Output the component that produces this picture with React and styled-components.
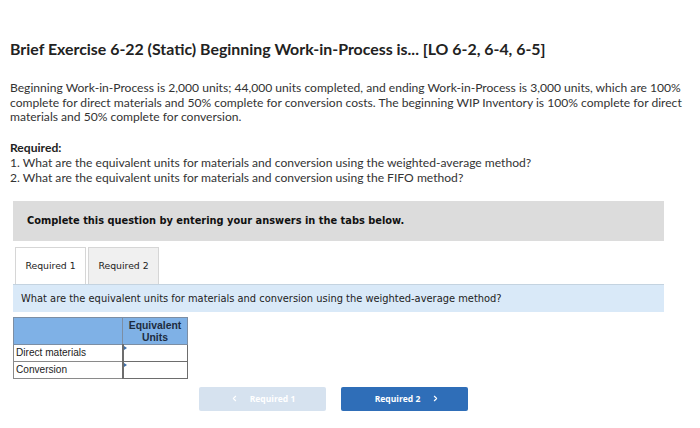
import React from "react";
import styled, {createGlobalStyle} from "styled-components";
import {ChevronLeft, ChevronRight} from "lucide-react";

const Global = createGlobalStyle`
	html, body {
		margin: 0;
		padding: 0;
		background: #fff;
	}
	body {
		font-family: Lato, "Open Sans", sans-serif;
		color: #2b2b2b;
	}
`;

const Page = styled.div`
	width: 700px;
	height: 428px;
	padding: 40px 10px 0 10px;
	box-sizing: border-box;
	overflow: hidden;
`;

const Title = styled.h1`
	margin: 0;
	font-family: Lato, sans-serif;
	font-weight: 700;
	font-size: 15.9px;
	line-height: 18px;
	color: #222;
`;

const Para = styled.p`
	margin: 23px 0 0;
	font-size: 12.1px;
	line-height: 14.6px;
	color: #333;
`;

const Required = styled.div`
	margin-top: 15px;
	font-size: 12.1px;
	line-height: 15px;
	color: #333;
`;

const ReqLabel = styled.div`
	font-weight: 700;
	color: #222;
`;

const Panel = styled.div`
	margin: 0 26px 0 3px;
`;

const Notice = styled.div`
	margin-top: 16px;
	height: 40px;
	background: #dcdcdc;
	display: flex;
	align-items: center;
	padding-left: 14px;
	font-family: "DejaVu Sans", Verdana, sans-serif;
	font-weight: 700;
	font-size: 9.85px;
	color: #111;
`;

const Tabs = styled.div`
	display: flex;
	gap: 2px;
	margin-top: 6px;
	padding-left: 2px;
`;

const Tab = styled.div`
	width: 71px;
	height: 37px;
	box-sizing: border-box;
	display: flex;
	align-items: center;
	justify-content: center;
	font-family: "DejaVu Sans", Verdana, sans-serif;
	font-size: 9.3px;
	color: #222;
	border: 1px solid #d6d6d6;
	border-bottom: none;
	background: ${p => (p.$active ? "#fff" : "#f0f0f0")};
`;

const Question = styled.div`
	height: 28px;
	background: #d9e9f8;
	border-top: 1px solid #c4d3e0;
	box-sizing: border-box;
	display: flex;
	align-items: center;
	padding-left: 8px;
	font-family: "DejaVu Sans", Verdana, sans-serif;
	font-size: 9.9px;
	color: #222;
`;

const Table = styled.table`
	margin-top: 5px;
	border-collapse: collapse;
	font-family: "Liberation Sans", Arial, sans-serif;
	font-size: 10.1px;
	color: #222;
`;

const Head = styled.th`
	background: #7fb1e6;
	border: 1px solid #7c8ea4;
	height: 25px;
	width: ${p => p.$w}px;
	padding: 2px 0 0;
	font-size: 10.4px;
	font-weight: 700;
	line-height: 12px;
	color: #1d2c40;
	vertical-align: top;
	box-sizing: border-box;
`;

const Label = styled.td`
	border: 1px solid #8a8a8a;
	height: 16px;
	padding: 0 0 0 2px;
`;

const Cell = styled.td`
	border: 2px solid #6d6d6d;
	border-width: 1px 1px 1px 2px;
	padding: 0;
	position: relative;
	background: #fff;
	&::before {
		content: "";
		position: absolute;
		left: 0;
		top: 1px;
		border-left: 3px solid #3f6ea8;
		border-top: 2px solid transparent;
		border-bottom: 2px solid transparent;
	}
`;

const Nav = styled.div`
	display: flex;
	gap: 15px;
	margin: 8px 0 0 186px;
`;

const NavButton = styled.div`
	width: 127px;
	height: 24px;
	border-radius: 2px;
	display: flex;
	align-items: center;
	justify-content: center;
	gap: 11px;
	font-family: "Open Sans", sans-serif;
	font-weight: 700;
	font-size: 8.5px;
	color: #fff;
	background: ${p => (p.$disabled ? "#d6e2ef" : "#2f6eb8")};
	padding-left: ${p => (p.$disabled ? "0" : "6px")};
	box-sizing: border-box;
`;

export default function App() {
	return <Page>
		<Global/>
		<Title>Brief Exercise 6-22 (Static) Beginning Work-in-Process is... [LO 6-2, 6-4, 6-5]</Title>
		<Para>
			Beginning Work-in-Process is 2,000 units; 44,000 units completed, and ending Work-in-Process is 3,000 units, which are 100%
			complete for direct materials and 50% complete for conversion costs. The beginning WIP Inventory is 100% complete for direct
			materials and 50% complete for conversion.
		</Para>
		<Required>
			<ReqLabel>Required:</ReqLabel>
			<div>1. What are the equivalent units for materials and conversion using the weighted-average method?</div>
			<div>2. What are the equivalent units for materials and conversion using the FIFO method?</div>
		</Required>
		<Panel>
			<Notice>Complete this question by entering your answers in the tabs below.</Notice>
			<Tabs>
				<Tab $active>Required 1</Tab>
				<Tab>Required 2</Tab>
			</Tabs>
			<Question>What are the equivalent units for materials and conversion using the weighted-average method?</Question>
			<Table>
				<thead>
					<tr>
						<Head $w={109}/>
						<Head $w={65}>Equivalent<br/>Units</Head>
					</tr>
				</thead>
				<tbody>
					<tr>
						<Label>Direct materials</Label>
						<Cell/>
					</tr>
					<tr>
						<Label>Conversion</Label>
						<Cell/>
					</tr>
				</tbody>
			</Table>
			<Nav>
				<NavButton $disabled><ChevronLeft size={9} strokeWidth={3}/>Required 1</NavButton>
				<NavButton>Required 2<ChevronRight size={9} strokeWidth={3}/></NavButton>
			</Nav>
		</Panel>
	</Page>;
}
